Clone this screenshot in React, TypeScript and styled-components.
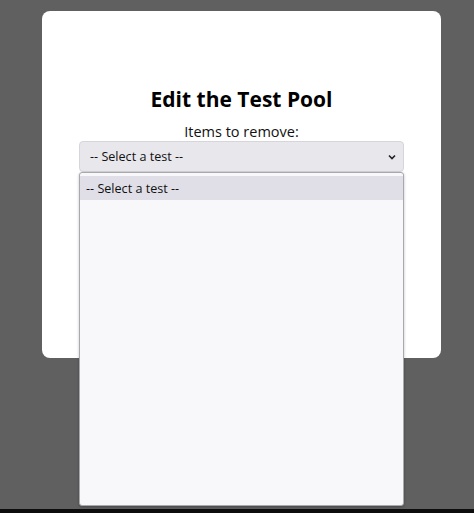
import React from "react";
import styled, { createGlobalStyle } from "styled-components";

const Global = createGlobalStyle`
  html, body { margin: 0; padding: 0; }
  body {
    width: 474px;
    height: 513px;
    overflow: hidden;
    background: #606060;
    font-family: "Open Sans", "Noto Sans", sans-serif;
  }
`;

const Screen = styled.div`
  position: relative;
  width: 474px;
  height: 513px;
  display: flex;
  flex-direction: column;
`;

const Stage = styled.div`
  flex: 1;
  padding: 11px 33px 0 42px;
`;

const BottomBar = styled.div`
  height: 4px;
  background: #0d0d0d;
`;

const Card = styled.div`
  width: 399px;
  height: 347px;
  box-sizing: border-box;
  background: #ffffff;
  border-radius: 8px;
  display: flex;
  flex-direction: column;
  align-items: center;
  padding-top: 74px;
`;

const Title = styled.h2`
  margin: 0;
  font-family: "Open Sans", sans-serif;
  font-weight: 700;
  font-size: 21px;
  line-height: 28px;
  color: #000;
`;

const Label = styled.div`
  margin-top: 10px;
  font-size: 14.5px;
  line-height: 18px;
  color: #111;
`;

const SelectWrap = styled.div`
  position: relative;
  margin-top: 0;
  width: 325px;
`;

const SelectBox = styled.div`
  box-sizing: border-box;
  height: 31px;
  background: #e8e7ec;
  border: 1px solid #d6d5db;
  border-radius: 4px;
  display: flex;
  align-items: center;
  justify-content: space-between;
  padding: 0 6px 0 10px;
  font-size: 12.6px;
  color: #111;
`;

const Chevron = styled.svg`
  width: 10px;
  height: 10px;
`;

const ListBox = styled.div`
  position: absolute;
  left: 0;
  top: 31px;
  width: 325px;
  height: 334px;
  box-sizing: border-box;
  background: #f8f8fa;
  border: 1px solid #a9a9ad;
  border-radius: 3px;
  padding-top: 3px;
  box-shadow: 0 1px 3px rgba(0, 0, 0, 0.25);
`;

const Option = styled.div<{ $active?: boolean }>`
  height: 24px;
  display: flex;
  align-items: center;
  padding-left: 6px;
  font-size: 12.6px;
  color: #111;
  background: ${(p) => (p.$active ? "#e0dfe7" : "transparent")};
`;

export default function App() {
  return (
    <>
      <Global />
      <Screen>
        <Stage>
          <Card>
            <Title>Edit the Test Pool</Title>
            <Label>Items to remove:</Label>
            <SelectWrap>
              <SelectBox>
                <span>-- Select a test --</span>
                <Chevron viewBox="0 0 10 10">
                  <path d="M2 3.5 L5 6.5 L8 3.5" fill="none" stroke="#222" strokeWidth="1.6" />
                </Chevron>
              </SelectBox>
              <ListBox>
                <Option $active>-- Select a test --</Option>
              </ListBox>
            </SelectWrap>
          </Card>
        </Stage>
        <BottomBar />
      </Screen>
    </>
  );
}
